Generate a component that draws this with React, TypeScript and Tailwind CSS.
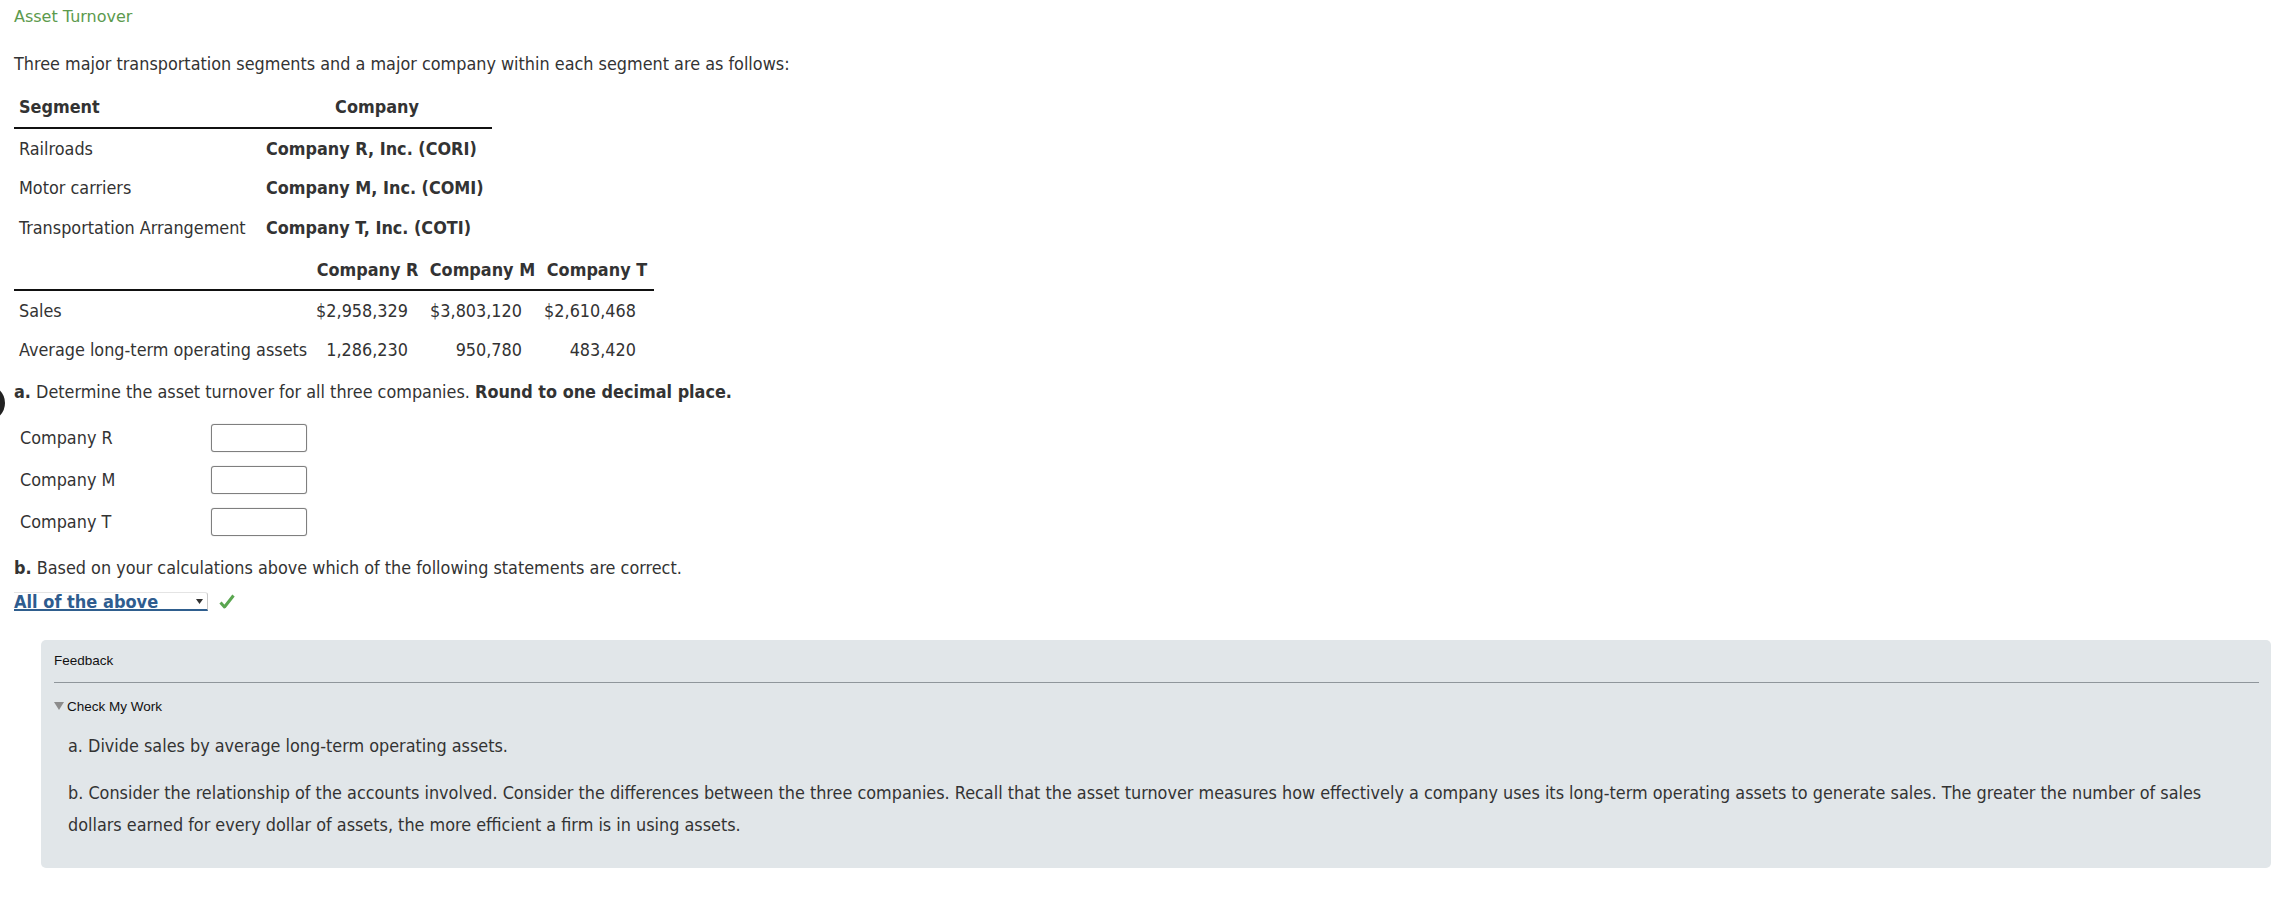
import React from "react";

const Row1 = ({ seg, co }: { seg: string; co: string }) => (
  <tr className="h-[40px]">
    <td className="whitespace-nowrap pl-[5px] align-middle">{seg}</td>
    <td className="whitespace-nowrap pl-[4px] align-middle font-bold">{co}</td>
  </tr>
);

const InputRow = ({ label }: { label: string }) => (
  <div className="flex h-[42px] items-center">
    <div className="w-[211px] pl-[20px]">{label}</div>
    <div className="h-[28px] w-[96px] rounded-[3px] border border-[#7f7f7f] bg-white shadow-[0_0_1px_#999]" />
  </div>
);

export default function App() {
  return (
    <div className="relative h-[918px] w-full overflow-hidden bg-white font-['DejaVu_Sans_Condensed','DejaVu_Sans',sans-serif] font-stretch-condensed text-[17.85px] text-[#333]">
      <div className="absolute left-[-31px] top-[385px] h-[36px] w-[36px] rounded-full border-[5px] border-[#222]" />

      <div className="mt-[7px] h-[20px] pl-[14px] font-['DejaVu_Sans',sans-serif] font-stretch-normal text-[16px] leading-[20px] text-[#5c9a4d]">
        Asset Turnover
      </div>

      <div className="mt-[25px] h-[24px] pl-[14px] leading-[24px]">
        Three major transportation segments and a major company within each segment are as follows:
      </div>

      <table className="ml-[14px] mt-[11px] w-[478px] table-fixed border-collapse leading-[24px]">
        <colgroup>
          <col className="w-[248px]" />
          <col className="w-[230px]" />
        </colgroup>
        <thead>
          <tr className="h-[41px] border-b-2 border-[#111]">
            <th className="pl-[5px] text-left align-middle font-bold">Segment</th>
            <th className="text-center align-middle font-bold">Company</th>
          </tr>
        </thead>
        <tbody>
          <Row1 seg="Railroads" co="Company R, Inc. (CORI)" />
          <Row1 seg="Motor carriers" co="Company M, Inc. (COMI)" />
          <Row1 seg="Transportation Arrangement" co="Company T, Inc. (COTI)" />
        </tbody>
      </table>

      <table className="ml-[14px] mt-[2px] w-[640px] table-fixed border-collapse leading-[24px]">
        <colgroup>
          <col className="w-[296px]" />
          <col className="w-[115px]" />
          <col className="w-[115px]" />
          <col className="w-[114px]" />
        </colgroup>
        <thead>
          <tr className="h-[40px] border-b-2 border-[#111]">
            <th />
            <th className="whitespace-nowrap text-center align-middle font-bold">Company R</th>
            <th className="whitespace-nowrap text-center align-middle font-bold">Company M</th>
            <th className="whitespace-nowrap text-center align-middle font-bold">Company T</th>
          </tr>
        </thead>
        <tbody>
          <tr className="h-[40px]">
            <td className="pl-[5px] align-middle">Sales</td>
            <td className="pr-[17px] text-right align-middle">$2,958,329</td>
            <td className="pr-[18px] text-right align-middle">$3,803,120</td>
            <td className="pr-[18px] text-right align-middle">$2,610,468</td>
          </tr>
          <tr className="h-[40px]">
            <td className="whitespace-nowrap pl-[5px] align-middle">Average long-term operating assets</td>
            <td className="pr-[17px] text-right align-middle">1,286,230</td>
            <td className="pr-[18px] text-right align-middle">950,780</td>
            <td className="pr-[18px] text-right align-middle">483,420</td>
          </tr>
        </tbody>
      </table>

      <div className="mt-[10px] h-[24px] pl-[14px] leading-[24px]">
        <span className="font-bold">a.</span> Determine the asset turnover for all three companies.{" "}
        <span className="font-bold">Round to one decimal place.</span>
      </div>

      <div className="mt-[13px]">
        <InputRow label="Company R" />
        <InputRow label="Company M" />
        <InputRow label="Company T" />
      </div>

      <div className="mt-[13px] h-[24px] pl-[14px] leading-[24px]">
        <span className="font-bold">b.</span> Based on your calculations above which of the following statements are correct.
      </div>

      <div className="mt-[12px] flex items-center pl-[14px]">
        <div className="relative flex h-[19px] w-[194px] items-center rounded-tr-[3px] border-r border-t border-b-2 border-r-[#c8c8c8] border-t-[#e4e4e4] border-b-[#2f5e8e] bg-white">
          <span className="text-[18px] font-bold leading-[17px] text-[#2e5c8f]">All of the above</span>
          <svg className="absolute right-[4px] top-[6px]" width="7" height="5" viewBox="0 0 7 5">
            <path d="M0 0 L7 0 L3.5 5 Z" fill="#333" />
          </svg>
        </div>
        <svg className="ml-[11px]" width="16" height="15" viewBox="0 0 16 15">
          <path d="M1.5 8.5 L5.5 13 L14.5 1.5" fill="none" stroke="#5aa650" strokeWidth="3" strokeLinejoin="round" />
        </svg>
      </div>

      <div className="ml-[41px] mr-[7px] mt-[29px] rounded-[5px] bg-[#e1e6e9] pb-[27px] pl-[13px] pr-[12px] pt-[13px]">
        <div className="h-[16px] font-['Liberation_Sans',Arial,sans-serif] text-[13.5px] leading-[16px] text-[#111]">Feedback</div>
        <div className="mt-[13px] h-px bg-[#8f969b]" />
        <div className="mt-[16px] flex h-[16px] items-center font-['Liberation_Sans',Arial,sans-serif] text-[13.5px] leading-[16px] text-[#111]">
          <svg className="mr-[3px] mt-[-3px]" width="10" height="8" viewBox="0 0 10 8">
            <path d="M0 0 L10 0 L5 8 Z" fill="#8c8c8c" />
          </svg>
          Check My Work
        </div>
        <div className="mt-[15px] pl-[14px] pr-[10px] leading-[32px] text-[#333]">
          <p>a. Divide sales by average long-term operating assets.</p>
          <p className="mt-[15px]">
            b. Consider the relationship of the accounts involved. Consider the differences between the three companies. Recall that the asset turnover measures how effectively a company uses its long-term operating assets to generate sales. The greater the number of sales dollars earned for every dollar of assets, the more efficient a firm is in using assets.
          </p>
        </div>
      </div>
    </div>
  );
}
